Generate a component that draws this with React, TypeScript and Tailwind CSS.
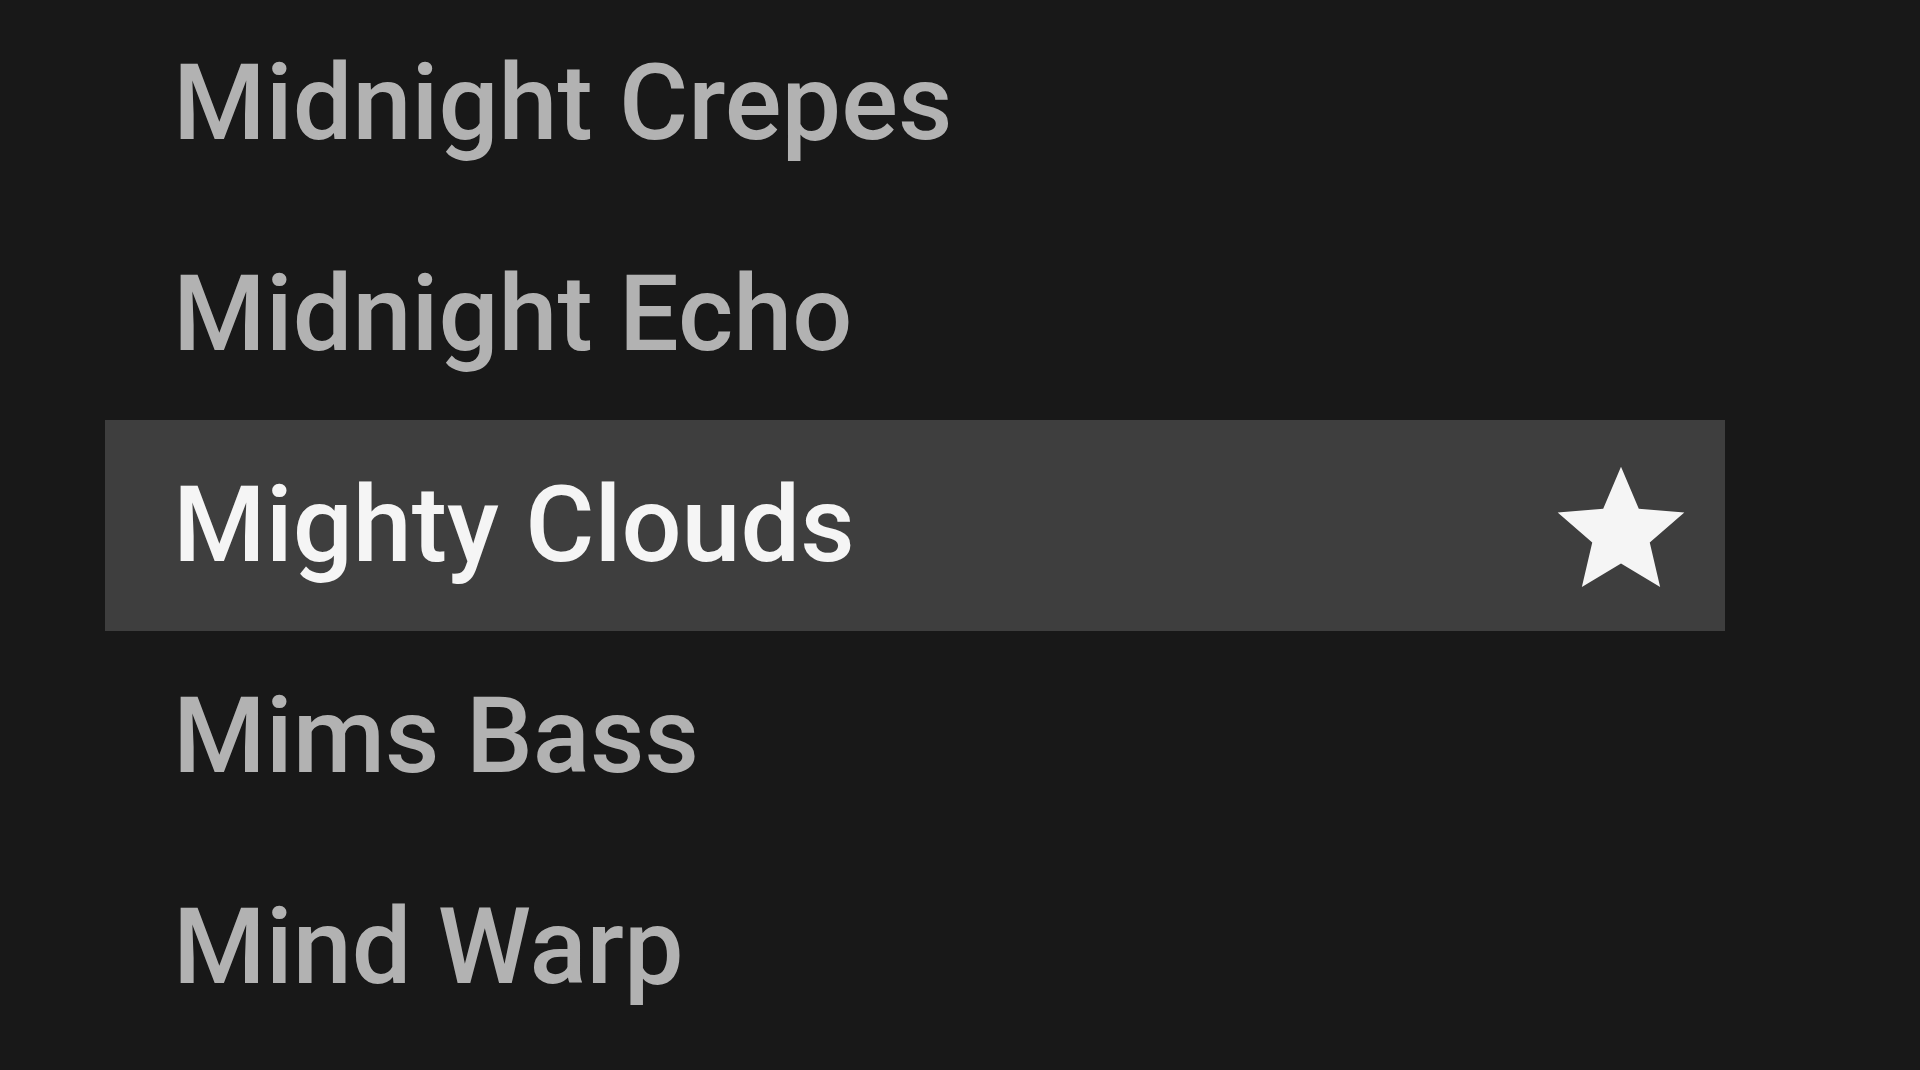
import React from "react";

const PRESETS = [
  { name: "Midnight Crepes", fav: false },
  { name: "Midnight Echo", fav: false },
  { name: "Mighty Clouds", fav: true },
  { name: "Mims Bass", fav: false },
  { name: "Mind Warp", fav: false },
];

const SELECTED = "Mighty Clouds";

function StarIcon(): React.ReactElement {
  return (
    <svg viewBox="0 0 24 24" className="w-[152px] h-[152px] shrink-0 mt-[8px]" fill="#f5f5f5">
      <path d="M12 17.27L18.18 21l-1.64-7.03L22 9.24l-7.19-.61L12 2 9.19 8.63 2 9.24l5.46 4.73L5.82 21z" />
    </svg>
  );
}

export default function App(): React.ReactElement {
  return (
    <div className="w-[1920px] h-[1070px] overflow-hidden bg-[#181818] font-['Roboto','Liberation_Sans',sans-serif]">
      <ul className="-mt-[2px] ml-[105px] w-[1620px]">
        {PRESETS.map((p) => {
          const active = p.name === SELECTED;
          return (
            <li
              key={p.name}
              className={`h-[211px] flex items-center justify-between pl-[68px] pr-[28px] ${
                active ? "bg-[#3e3e3e] text-[#f5f5f5]" : "text-[#b2b2b2]"
              }`}
            >
              <span className="text-[106px] font-medium leading-[211px] whitespace-nowrap">{p.name}</span>
              {p.fav && <StarIcon />}
            </li>
          );
        })}
      </ul>
    </div>
  );
}
